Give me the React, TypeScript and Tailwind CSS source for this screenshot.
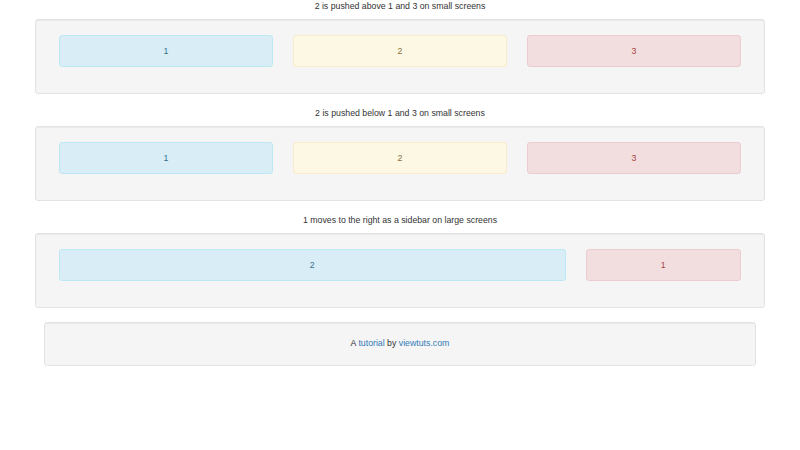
export default function App() {
  const sections = [
    {
      title: '2 is pushed above 1 and 3 on small screens',
      cols: 'grid-cols-3',
      boxes: [
        { label: '1', span: '', tone: 'info' },
        { label: '2', span: '', tone: 'warning' },
        { label: '3', span: '', tone: 'danger' },
      ],
    },
    {
      title: '2 is pushed below 1 and 3 on small screens',
      cols: 'grid-cols-3',
      boxes: [
        { label: '1', span: '', tone: 'info' },
        { label: '2', span: '', tone: 'warning' },
        { label: '3', span: '', tone: 'danger' },
      ],
    },
    {
      title: '1 moves to the right as a sidebar on large screens',
      cols: 'grid-cols-12',
      boxes: [
        { label: '2', span: 'col-span-9', tone: 'info' },
        { label: '1', span: 'col-span-3', tone: 'danger' },
      ],
    },
  ]

  const toneClass: Record<string, string> = {
    info: 'bg-[#d9edf7] border-[#bce8f1] text-[#31708f]',
    warning: 'bg-[#fcf8e3] border-[#faebcc] text-[#8a6d3b]',
    danger: 'bg-[#f2dede] border-[#ebccd1] text-[#a94442]',
  }

  return (
    <div className="min-h-[450px] bg-white font-['Liberation_Sans',Arial,sans-serif] text-[8.75px] leading-[12.5px] text-[#333]">
      <div className="mx-auto w-[730px]">
        {sections.map((section, i) => (
          <div key={i}>
            <h4 className="mb-[6.5px] text-center">{section.title}</h4>
            {/* Well */}
            <div className="mb-[13px] rounded-[3px] border border-[#e3e3e3] bg-[#f5f5f5] px-[23px] pt-[15px] pb-[26px] shadow-[inset_0_1px_1px_rgba(0,0,0,0.05)]">
              <div className={`grid ${section.cols} gap-x-[20px]`}>
                {section.boxes.map((box, j) => (
                  <div
                    key={j}
                    className={`${box.span} rounded-[3px] border py-[8.75px] text-center ${toneClass[box.tone]}`}
                  >
                    {box.label}
                  </div>
                ))}
              </div>
            </div>
          </div>
        ))}

        {/* Footer */}
        <div className="mx-[9px] mt-[13.5px] flex h-[44px] items-center justify-center rounded-[3px] border border-[#e3e3e3] bg-[#f5f5f5] shadow-[inset_0_1px_1px_rgba(0,0,0,0.05)]">
          <p>
            A <a className="text-[#337ab7]">tutorial</a> by{' '}
            <a className="text-[#337ab7]">viewtuts.com</a>
          </p>
        </div>
      </div>
    </div>
  )
}
